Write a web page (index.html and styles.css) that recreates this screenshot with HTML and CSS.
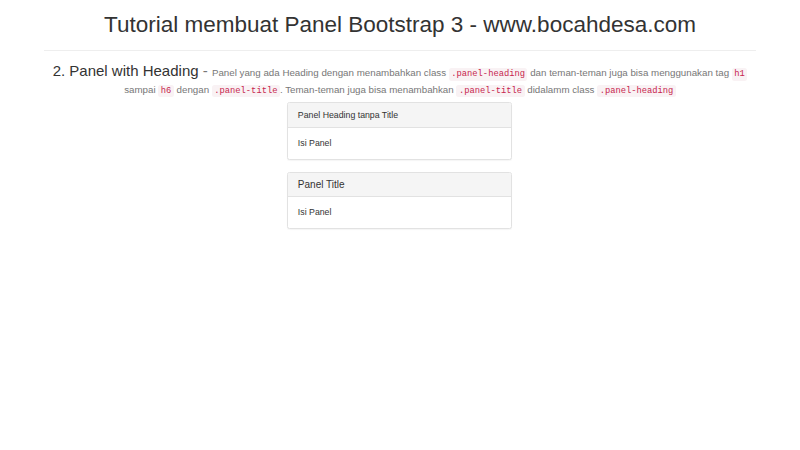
FILE: index.html
```html
<!DOCTYPE html>
<html>
<head>
<meta charset="utf-8">
<link rel="stylesheet" href="styles.css">
</head>
<body>
<div class="container">
  <h1 class="title">Tutorial membuat Panel Bootstrap 3 - www.bocahdesa.com</h1>
  <hr class="rule">
  <h3 class="section">2. Panel with Heading <span class="dash">-</span> <small>Panel yang ada Heading dengan menambahkan class <code>.panel-heading</code> dan teman-teman juga bisa menggunakan tag <code>h1</code> sampai <code>h6</code> dengan <code>.panel-title</code>. Teman-teman juga bisa menambahkan <code>.panel-title</code> didalamm class <code>.panel-heading</code></small></h3>
  <div class="row">
    <div class="col">
      <div class="panel">
        <div class="panel-heading">Panel Heading tanpa Title</div>
        <div class="panel-body">Isi Panel</div>
      </div>
      <div class="panel">
        <div class="panel-heading"><h3 class="panel-title">Panel Title</h3></div>
        <div class="panel-body">Isi Panel</div>
      </div>
    </div>
  </div>
</div>
</body>
</html>
```

FILE: styles.css
```css
* { box-sizing: border-box; }
html, body { margin: 0; padding: 0; background: #fff; }
body {
  font-family: "Liberation Sans", Arial, sans-serif;
  font-size: 8.75px;
  line-height: 1.42857;
  color: #333;
}
.container {
  width: 731.25px;
  margin: 0 auto;
  padding: 0 9.375px;
}
.title {
  font-size: 22.5px;
  font-weight: 500;
  line-height: 1.1;
  margin: 12.5px 0 6.25px;
  text-align: center;
}
.rule {
  margin: 12.5px 0;
  border: 0;
  border-top: 1px solid #eee;
  height: 0;
}
.section {
  font-size: 15px;
  font-weight: 500;
  line-height: 1.1;
  margin: 12.5px 0 5.5px;
  text-align: center;
}
.dash { color: #777; }
.section small {
  font-size: 65%;
  color: #777;
  font-weight: normal;
  line-height: 1;
}
code {
  font-family: "Liberation Mono", "Courier New", monospace;
  font-size: 90%;
  padding: 1.25px 2.5px;
  color: #c7254e;
  background: #f9f2f4;
  border-radius: 2.5px;
}
.row {
  display: flex;
  margin: 0 -9.375px;
}
.col {
  width: 33.3333%;
  margin-left: 33.3333%;
  padding: 0 9.375px;
}
.panel {
  background: #fff;
  border: 1px solid #e2e2e2;
  border-radius: 2.5px;
  margin-bottom: 12.5px;
  box-shadow: 0 1px 1px rgba(0,0,0,.04);
}
.panel-heading {
  background: #f5f5f5;
  color: #333;
  border-bottom: 1px solid #e2e2e2;
  padding: 5.75px 9.375px;
  border-radius: 2px 2px 0 0;
}
.panel-title {
  margin: 0;
  font-size: 10px;
  font-weight: 500;
  line-height: 1.1;
}
.panel-body {
  padding: 9.25px 9.375px;
}
```
